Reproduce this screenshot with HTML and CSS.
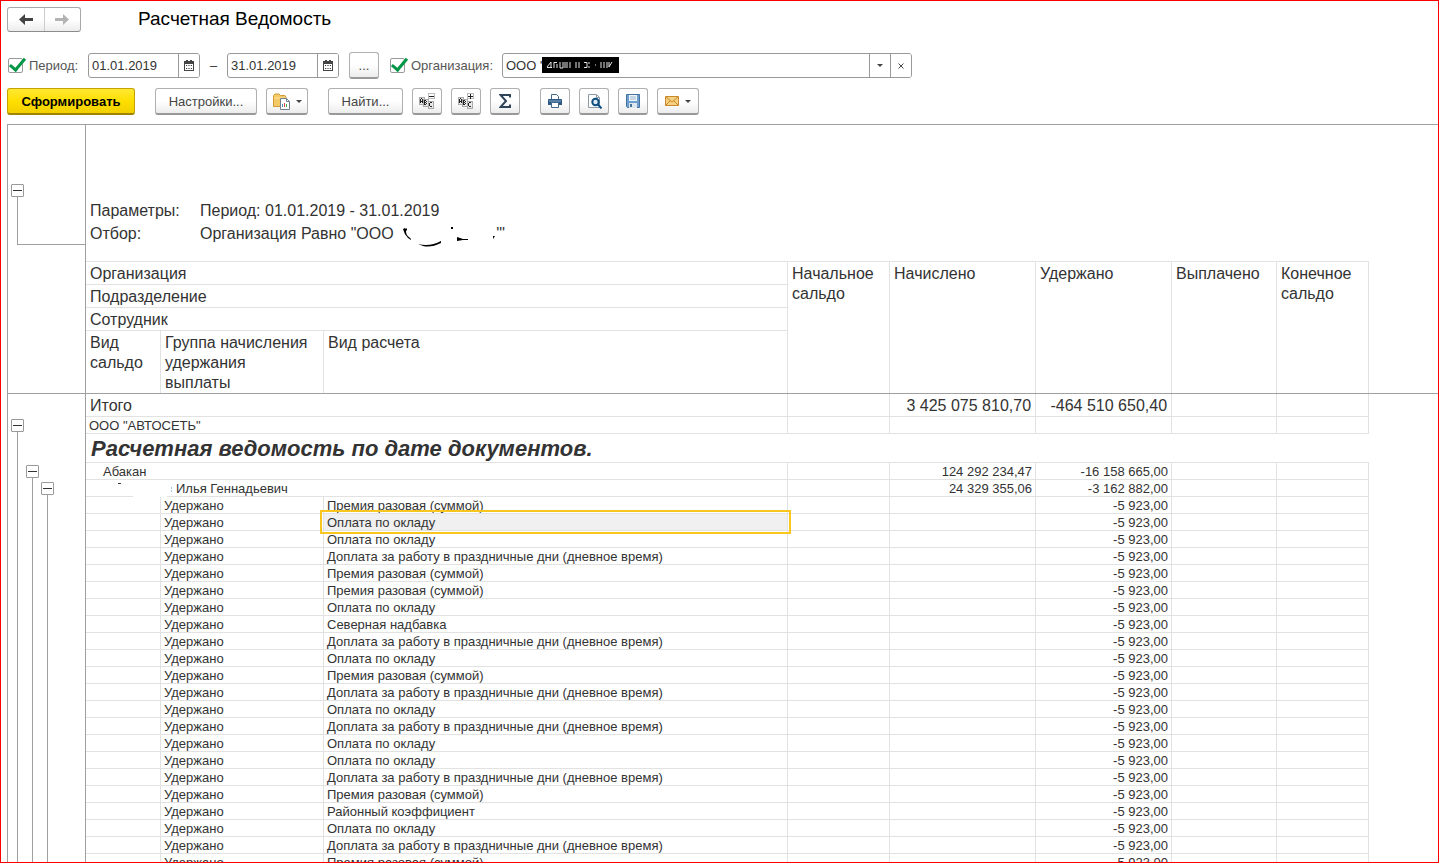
FILE: index.html
```
<!DOCTYPE html>
<html lang="ru">
<head>
    <meta charset="UTF-8">
    <meta name="viewport" content="width=device-width, initial-scale=1.0">
    <title>Расчетная Ведомость</title>
    <link rel="stylesheet" href="styles.css">
</head>
<body>
    <div class="window">
        <header class="title-bar">
            <div class="nav-group">
                <button type="button" class="nav-btn" aria-label="Назад">
                    <svg width="14" height="11" viewBox="0 0 14 11"><path d="M6 0 0 5.500 6 11V7H14V4H6z" fill="#444"/></svg>
                </button>
                <button type="button" class="nav-btn" aria-label="Вперед">
                    <svg width="14" height="11" viewBox="0 0 14 11"><path d="M8 0 14 5.500 8 11V7H0V4H8z" fill="#b3b3b3"/></svg>
                </button>
            </div>
            <h1>Расчетная Ведомость</h1>
        </header>

        <form class="filters">
            <input type="checkbox" class="check" id="use-period" checked>
            <label for="use-period" class="label-period">Период:</label>
            <div class="field date-field">
                <input type="text" value="01.01.2019" aria-label="Начало периода">
                <button type="button" aria-label="Выбрать дату начала">
                    <svg width="10" height="11" viewBox="0 0 10 11"><path d="M0 1h2V0h2v1h2V0h2v1h2v10H0z" fill="#444"/><path d="M1 4h8v6H1z" fill="#fff"/><path d="M2 5.500h6M2 8.500h6" stroke="#444" stroke-dasharray="1.200 1.200"/></svg>
                </button>
            </div>
            <span class="dash">–</span>
            <div class="field date-field">
                <input type="text" value="31.01.2019" aria-label="Конец периода">
                <button type="button" aria-label="Выбрать дату окончания">
                    <svg width="10" height="11" viewBox="0 0 10 11"><path d="M0 1h2V0h2v1h2V0h2v1h2v10H0z" fill="#444"/><path d="M1 4h8v6H1z" fill="#fff"/><path d="M2 5.500h6M2 8.500h6" stroke="#444" stroke-dasharray="1.200 1.200"/></svg>
                </button>
            </div>
            <button type="button" class="btn btn-icon btn-dots">...</button>
            <input type="checkbox" class="check" id="use-org" checked>
            <label for="use-org" class="label-org">Организация:</label>
            <div class="field org-field">
                <input type="text" value="ООО &quot;" aria-label="Организация">
                <svg class="mask" width="77" height="16" viewBox="0 0 77 16">
                    <path d="M0 0h77v16H0z"/>
                    <path d="M5 10l4-5v6M5 10.500h5M12 5v6M12 5.500h3M15 7v4M18 5v6h3V5M23 5v6M25 5v6M28 5v6M34 5v6M37 5v6M42 5.500h3v5h-3M47 5v2M47 9v2M53 8h1M59 5v6M62 5v6M65 5v6M67 5v5l3-5" fill="none" stroke="#e4e4e4"/>
                </svg>
                <button type="button" aria-label="Выбрать"><i class="caret"></i></button>
                <button type="button" aria-label="Очистить">
                    <svg width="6" height="6" viewBox="0 0 6 6"><path d="M.5.5l5 5M5.500.5l-5 5" stroke="#444"/></svg>
                </button>
            </div>
        </form>

        <div class="toolbar">
            <button type="button" class="btn btn-primary">Сформировать</button>
            <button type="button" class="btn btn-settings">Настройки...</button>
            <button type="button" class="btn btn-menu" aria-label="Варианты отчета">
                <svg width="17" height="17" viewBox="0 0 17 17">
                    <path d="M.5 2.500 2 1h4l1.500 1.500H12l1 2v9H.5z" fill="#f4ca68" stroke="#d39a35"/>
                    <path d="M1 5h12" stroke="#fbe3a0"/>
                    <path d="M7.500 5.500h6l3 3v8h-9z" fill="#fff" stroke="#71808f"/>
                    <path d="M13.500 5.500v3h3" fill="none" stroke="#71808f"/>
                    <path d="M9.500 14v-3" stroke="#4a90c2"/><path d="M11.500 14v-4" stroke="#e0413e"/><path d="M13.500 14v-3" stroke="#4caf50"/>
                </svg>
                <i class="caret"></i>
            </button>
            <button type="button" class="btn btn-find">Найти...</button>
            <button type="button" class="btn btn-icon" aria-label="Свернуть группы">
                <svg class="crisp" width="16" height="16" viewBox="0 0 16 16">
                    <path d="M0 4h5v7H0zM4 6h5v7H4zM9 8h5v7H9z" fill="#e9e9e9" stroke="#aaa"/>
                    <path d="M1 6h1v4H1zM3 6h1v4H3zM2 5h1v1H2zM2 8h1v1H2zM5 7h1v5H5zM6 7h1v1H6zM6 9h1v1H6zM6 11h1v1H6zM7 8h1v1H7zM7 10h1v1H7zM10 10h1v3h-1zM11 9h2v1h-2zM11 13h2v1h-2z" fill="#222"/>
                    <path d="M9.500.5h6v5h-6z" fill="#fff" stroke="#bbb"/><path d="M10 3h5v1h-5z" fill="#222"/>
                </svg>
            </button>
            <button type="button" class="btn btn-icon" aria-label="Развернуть группы">
                <svg class="crisp" width="16" height="16" viewBox="0 0 16 16">
                    <path d="M0 4h5v7H0zM4 6h5v7H4zM9 8h5v7H9z" fill="#e9e9e9" stroke="#aaa"/>
                    <path d="M1 6h1v4H1zM3 6h1v4H3zM2 5h1v1H2zM2 8h1v1H2zM5 7h1v5H5zM6 7h1v1H6zM6 9h1v1H6zM6 11h1v1H6zM7 8h1v1H7zM7 10h1v1H7zM10 10h1v3h-1zM11 9h2v1h-2zM11 13h2v1h-2z" fill="#222"/>
                    <path d="M9.500.5h6v5h-6z" fill="#fff" stroke="#bbb"/><path d="M10 3h5v1h-5zM12 1h1v5h-1z" fill="#222"/>
                </svg>
            </button>
            <button type="button" class="btn btn-icon" aria-label="Сумма">
                <svg width="12" height="14" viewBox="0 0 12 14"><path d="M11 3.500V1H1.500L7 7l-5.500 6H11v-2.500" fill="none" stroke="#2f4557" stroke-width="2"/></svg>
            </button>
            <button type="button" class="btn btn-icon btn-print" aria-label="Печать">
                <svg width="14" height="14" viewBox="0 0 14 14">
                    <path d="M3.500 5V.5h5l2 2V5" fill="#fff" stroke="#44688a"/>
                    <path d="M0 6q0-1 1-1h12q1 0 1 1v5H0z" fill="#2d5a84"/><path d="M1 7h12" stroke="#82a8c8"/>
                    <path d="M3.500 8.500h7v5h-7z" fill="#fff" stroke="#44688a"/>
                </svg>
            </button>
            <button type="button" class="btn btn-icon" aria-label="Предварительный просмотр">
                <svg width="15" height="15" viewBox="0 0 15 15">
                    <path d="M1.500.5h8l3 3v10h-11z" fill="#fff" stroke="#8b98a5"/>
                    <path d="M9.500.5v3h3" fill="none" stroke="#8b98a5"/>
                    <circle cx="8.500" cy="8" r="3.200" fill="#dcebf5" stroke="#0e4f80" stroke-width="2"/><path d="M11 10.500l3.500 4" stroke="#0e4f80" stroke-width="2"/>
                </svg>
            </button>
            <button type="button" class="btn btn-icon" aria-label="Сохранить">
                <svg width="14" height="14" viewBox="0 0 14 14">
                    <path d="M.5.5h13v13h-12l-1-1z" fill="#6e9ecb" stroke="#44739f"/>
                    <path d="M3 1h8v6H3z" fill="#eef5fb"/><path d="M4 3h6M4 5h6" stroke="#9fb6ca"/>
                    <path d="M3 9h8v5H3z" fill="#dfe7ee"/><path d="M4 10h2v3H4z" fill="#44739f"/>
                </svg>
            </button>
            <button type="button" class="btn btn-menu" aria-label="Отправить">
                <svg width="14" height="10" viewBox="0 0 14 10"><path d="M.5.5h13v9H.5z" fill="#f6d081" stroke="#c88a2b"/><path d="M1 1l6 5 6-5M1 9l4-4M13 9 9 5" fill="none" stroke="#c88a2b"/></svg>
                <i class="caret"></i>
            </button>
        </div>

        <main class="sheet">
            <section class="pane pane-head">
                <div class="gutter">
                    <div class="group group-params">
                        <button type="button" class="fold" aria-label="Свернуть"></button>
                        <span class="corner"></span>
                    </div>
                </div>
                <div class="cells">
                    <dl class="params">
                        <dt>Параметры:</dt>
                        <dd>Период: 01.01.2019 - 31.01.2019</dd>
                        <dt>Отбор:</dt>
                        <dd>Организация Равно "ООО <svg class="scribble" width="93" height="20" viewBox="0 0 93 20">
                            <path d="M0 2l2-1 1 1 1-1v2l-1 1q0 4 3 6l2 2v1l-3-2Q1 7 0 2z"/>
                            <path d="M15 17q12 3 23-3v2q-10 5-18 3z"/>
                            <path d="M48 0h2v2h-2zM54 10l6 2h5v1h-5l-6 1zM90 9h2l-2 3z"/>
                        </svg>'"</dd>
                    </dl>
                    <table class="report report-head">
                        <colgroup><col class="c-kind"><col class="c-group"><col class="c-calc"><col class="c-start"><col class="c-accrued"><col class="c-held"><col class="c-paid"><col class="c-end"></colgroup>
                        <thead>
                            <tr>
                                <th colspan="3">Организация</th>
                                <th rowspan="4">Начальное сальдо</th>
                                <th rowspan="4">Начислено</th>
                                <th rowspan="4">Удержано</th>
                                <th rowspan="4">Выплачено</th>
                                <th rowspan="4">Конечное сальдо</th>
                            </tr>
                            <tr><th colspan="3">Подразделение</th></tr>
                            <tr><th colspan="3">Сотрудник</th></tr>
                            <tr class="head-last"><th>Вид сальдо</th><th>Группа начисления удержания<br>выплаты</th><th>Вид расчета</th></tr>
                        </thead>
                    </table>
                </div>
            </section>

            <section class="pane pane-body">
                <div class="gutter">
                    <div class="group group-org"><button type="button" class="fold" aria-label="Свернуть организацию"></button></div>
                    <div class="group group-dept"><button type="button" class="fold" aria-label="Свернуть подразделение"></button></div>
                    <div class="group group-person"><button type="button" class="fold" aria-label="Свернуть сотрудника"></button></div>
                </div>
                <div class="cells">
                    <table class="report">
                        <colgroup><col class="c-kind"><col class="c-group"><col class="c-calc"><col class="c-start"><col class="c-accrued"><col class="c-held"><col class="c-paid"><col class="c-end"></colgroup>
                        <tbody id="rows">
                            <tr class="total"><td colspan="3">Итого</td><td></td><td class="num">3 425 075 810,70</td><td class="num">-464 510 650,40</td><td></td><td></td></tr>
                            <tr><td colspan="3">ООО "АВТОСЕТЬ"</td><td></td><td></td><td></td><td></td><td></td></tr>
                            <tr class="caption"><td colspan="8">Расчетная ведомость по дате документов.</td></tr>
                            <tr><td colspan="3" class="dept">Абакан</td><td></td><td class="num">124 292 234,47</td><td class="num">-16 158 665,00</td><td></td><td></td></tr>
                            <tr><td colspan="3" class="person">Илья Геннадьевич
                                <svg class="erased" width="60" height="17" viewBox="0 0 60 17">
                                    <path d="M17 0h34v17H17z" fill="#fff"/>
                                    <path d="M2 3h3v1H2z" fill="#333"/>
                                    <path d="M55 7h1v2h-1zM55 10h1v2h-1z" fill="#9cc8ea"/>
                                </svg>
                            </td><td></td><td class="num">24 329 355,06</td><td class="num">-3 162 882,00</td><td></td><td></td></tr>
                        </tbody>
                    </table>
                </div>
            </section>
        </main>
    </div>

    <script src="rows.js"></script>
</body>
</html>
```
FILE: styles.css
```
* {
    box-sizing: border-box;
}
body {
    margin: 0;
    font-family: "Liberation Sans", Arial, sans-serif;
    font-size: 13px;
    color: #333;
    background: #fff;
}
button, input {
    font: inherit;
    color: inherit;
    margin: 0;
    padding: 0;
}
.window {
    height: 100vh;
    display: flex;
    flex-direction: column;
    border: 1px solid #f00;
    overflow: hidden;
}

/* заголовок */
.title-bar {
    display: flex;
    align-items: center;
    height: 36px;
    padding-left: 6px;
    flex: none;
}
.nav-group {
    display: flex;
    width: 74px;
    height: 25px;
    border: 1px solid #a8a8a8;
    border-bottom-color: #8c8c8c;
    border-radius: 3px;
    background: linear-gradient(#fff 50%, #ececec);
}
.nav-btn {
    flex: 1;
    display: flex;
    align-items: center;
    justify-content: center;
    border: 0;
    background: none;
}
.nav-btn + .nav-btn {
    border-left: 1px solid #ccc;
}
h1 {
    margin: 0 0 0 57px;
    font-size: 19px;
    font-weight: normal;
    color: #000;
}

/* отборы */
.filters {
    display: flex;
    align-items: center;
    height: 27px;
    margin-top: 15px;
    padding-left: 7px;
    flex: none;
}
.check {
    appearance: none;
    width: 15px;
    height: 15px;
    border: 1px solid #999;
    border-radius: 2px;
    position: relative;
}
.check:checked::after {
    content: "";
    position: absolute;
    left: 4px;
    top: -4px;
    width: 6px;
    height: 13px;
    border: solid #009646;
    border-width: 0 3px 3px 0;
    transform: rotate(40deg);
}
label {
    color: #555;
    margin-left: 6px;
}
.label-period {
    width: 59px;
}
.label-org {
    width: 91px;
}
.field {
    display: flex;
    height: 25px;
    border: 1px solid #999;
    border-radius: 3px;
    position: relative;
    overflow: hidden;
}
.field input {
    flex: 1;
    min-width: 0;
    border: 0;
    padding-left: 3px;
    background: none;
}
.field button {
    flex: none;
    width: 21px;
    display: flex;
    align-items: center;
    justify-content: center;
    border: 0;
    border-left: 1px solid #999;
    background: #fff;
}
.date-field {
    width: 112px;
}
.dash {
    width: 27px;
    text-align: center;
}
.org-field {
    width: 410px;
}
.mask {
    position: absolute;
    left: 39px;
    top: 3px;
}
.caret {
    border: 3px solid transparent;
    border-top-color: #444;
    border-bottom: 0;
}

/* командная панель */
.toolbar {
    display: flex;
    gap: 9px;
    margin-top: 9px;
    padding-left: 6px;
    flex: none;
}
.btn {
    display: flex;
    align-items: center;
    justify-content: center;
    height: 27px;
    border: 1px solid #b0b0b0;
    border-bottom: 2px solid #999;
    border-radius: 3px;
    background: linear-gradient(#fff 50%, #ececec);
    color: #444;
}
.btn-icon {
    width: 30px;
}
.btn-dots {
    margin: 0 11px 0 10px;
}
.btn-primary {
    width: 128px;
    margin-right: 11px;
    border-color: #c5a200;
    border-bottom-color: #a08400;
    background: linear-gradient(#ffe834, #ffdf00 50%, #f2cf00);
    color: #000;
    font-weight: bold;
}
.btn-settings {
    width: 102px;
}
.btn-menu {
    width: 42px;
    gap: 6px;
}
.btn-find {
    width: 75px;
    margin-left: 11px;
}
.btn-print {
    margin-left: 11px;
}
.crisp {
    shape-rendering: crispEdges;
}

/* табличный документ */
.sheet {
    flex: 1;
    min-height: 0;
    display: flex;
    flex-direction: column;
    margin: 9px 0 0 6px;
    border: solid #a0a0a0;
    border-width: 1px 0 0 1px;
}
.pane {
    display: flex;
}
.pane-head {
    flex: none;
    border-bottom: 1px solid #a0a0a0;
}
.pane-body {
    flex: 1;
    min-height: 0;
    overflow: hidden;
}
.gutter {
    flex: none;
    width: 78px;
    display: flex;
    gap: 2px;
    padding-left: 3px;
    border-right: 1px solid #a0a0a0;
}
.cells {
    flex: 1;
    min-width: 0;
}
.group {
    display: flex;
    flex-direction: column;
    align-items: center;
    width: 13px;
}
.group::after {
    content: "";
    flex: 1;
    width: 1px;
    background: #a0a0a0;
}
.fold {
    flex: none;
    width: 13px;
    height: 13px;
    border: 1px solid #999;
    border-radius: 1px;
    background: linear-gradient(#333, #333) center / 9px 1px no-repeat, #fff;
}
.group-params {
    width: 74px;
    align-items: flex-start;
    padding-top: 59px;
}
.group-params::after {
    display: none;
}
.corner {
    height: 48px;
    width: 68px;
    margin-left: 6px;
    border: solid #a0a0a0;
    border-width: 0 0 1px 1px;
}
.group-org {
    padding-top: 25px;
}
.group-dept {
    padding-top: 71px;
}
.group-person {
    padding-top: 88px;
}
.params {
    display: grid;
    grid-template-columns: 110px 1fr;
    margin: 0;
    padding: 74px 0 16px 4px;
    font-size: 16px;
    line-height: 23px;
}
.params dd {
    margin: 0;
    height: 23px;
}
.scribble {
    margin-left: 5px;
    vertical-align: -8px;
}
.report {
    table-layout: fixed;
    width: 1283px;
    border-collapse: separate;
    border-spacing: 0;
}
.c-kind { width: 75px; }
.c-group { width: 163px; }
.c-calc { width: 464px; }
.c-start { width: 102px; }
.c-accrued { width: 146px; }
.c-held { width: 136px; }
.c-paid { width: 105px; }
.c-end { width: 92px; }
.report th {
    height: 23px;
    padding: 2px 4px 0;
    border: solid #e2e2e2;
    border-width: 0 1px 1px 0;
    font-size: 16px;
    font-weight: normal;
    line-height: 20px;
    text-align: left;
    vertical-align: top;
}
.report-head {
    border-top: 1px solid #e2e2e2;
}
.report .head-last th,
.report th[rowspan] {
    border-bottom: 0;
}
.report td {
    height: 17px;
    padding: 1px 3px 0;
    border: solid #e2e2e2;
    border-width: 0 1px 1px 0;
    line-height: 15px;
    white-space: nowrap;
}
.report .num {
    text-align: right;
}
.report .total td {
    height: 23px;
    padding: 2px 4px 0;
    font-size: 16px;
    line-height: 20px;
}
.report .caption td {
    height: 29px;
    padding: 2px 5px 0;
    border-right: 0;
    font-size: 22px;
    font-weight: bold;
    font-style: italic;
    line-height: 26px;
}
.report .dept {
    padding-left: 17px;
}
.report .person {
    position: relative;
    padding-left: 90px;
}
.erased {
    position: absolute;
    left: 30px;
    top: 0;
}
.report .selected {
    position: relative;
    background: #f0f0f0;
}
.selected::after {
    content: "";
    position: absolute;
    inset: -4px;
    border: 2px solid #f8c61e;
}
```
FILE: rows.js
```
// строки начислений по сотруднику
const calcs = {
    p: 'Премия разовая (суммой)',
    o: 'Оплата по окладу',
    d: 'Доплата за работу в праздничные дни (дневное время)',
    s: 'Северная надбавка',
    r: 'Районный коэффициент'
};
const order = 'poodpposdopdodoodprodp';
const rows = document.getElementById('rows');

[...order].forEach((key, i) => {
    const tr = document.createElement('tr');
    const selected = i === 1 ? ' class="selected"' : '';
    tr.innerHTML = `<td></td><td>Удержано</td><td${selected}>${calcs[key]}</td><td></td><td></td><td class="num">-5 923,00</td><td></td><td></td>`;
    rows.appendChild(tr);
});
```
